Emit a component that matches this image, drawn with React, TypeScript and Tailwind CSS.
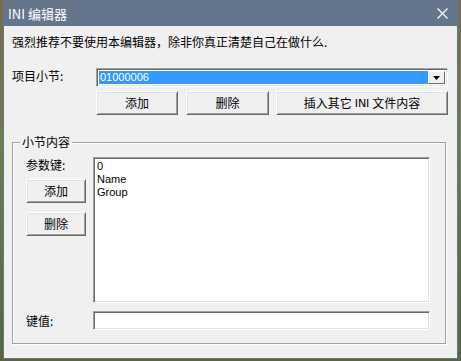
import type { ReactNode } from "react";

const cjk = "font-['Noto_Sans_CJK_SC',sans-serif]";

function RaisedButton({ children, className = "" }: { children: ReactNode; className?: string }) {
  return (
    <button
      type="button"
      className={`flex items-center justify-center border border-t-white border-l-white border-b-[#696969] border-r-[#696969] bg-[#f0f0f0] text-[12px] leading-none text-black shadow-[inset_1px_1px_0_#e3e3e3,inset_-1px_-1px_0_#a0a0a0] ${className}`}
    >
      {children}
    </button>
  );
}

function SunkenBox({ children, className = "" }: { children?: ReactNode; className?: string }) {
  return (
    <div
      className={`border border-t-[#a0a0a0] border-l-[#a0a0a0] border-b-white border-r-white bg-white shadow-[inset_1px_1px_0_#696969,inset_-1px_-1px_0_#e3e3e3] ${className}`}
    >
      {children}
    </div>
  );
}

export default function App() {
  const keys = ["0", "Name", "Group"];

  return (
    <div className={`h-[361px] w-[461px] overflow-hidden bg-[linear-gradient(180deg,#7a6a4a_0%,#6d7d4c_40%,#55683c_100%)] pl-[3px] ${cjk}`}>
      <div className="flex h-[359px] w-[455px] flex-col border-x border-b border-[#65758b] bg-[#f0f0f0]">
        {/* title bar */}
        <div className="flex h-[26px] shrink-0 items-center justify-between bg-[#65758b] pl-[4px] pr-[9px]">
          <span className="text-[13px] leading-none text-white">INI 编辑器</span>
          <svg width="11" height="11" viewBox="0 0 11 11" className="mt-[1px]">
            <path d="M0.5 0.5 L10.5 10.5 M10.5 0.5 L0.5 10.5" stroke="#ffffff" strokeWidth="1.2" />
          </svg>
        </div>

        <div className="flex flex-col pl-[8px]">
          <p className="mt-[9px] h-[14px] text-[12px] leading-[14px] text-black">
            强烈推荐不要使用本编辑器，除非你真正清楚自己在做什么.
          </p>

          {/* section row */}
          <div className="mt-[19px] flex">
            <div className="w-[84px] pt-[1px] text-[12px] leading-[14px] text-black">项目小节:</div>
            <div className="flex w-[352px] flex-col">
              <SunkenBox className="flex h-[19px] items-stretch p-[2px]">
                <div className="flex flex-1 items-center bg-[#3399ff] pl-[1px] font-['Liberation_Sans',sans-serif] text-[11px] text-white">
                  01000006
                </div>
                <div className="flex w-[17px] items-center justify-center border border-t-white border-l-white border-b-[#696969] border-r-[#696969] bg-[#f0f0f0]">
                  <svg width="7" height="4" viewBox="0 0 7 4">
                    <path d="M0 0 H7 L3.5 4 Z" fill="#000000" />
                  </svg>
                </div>
              </SunkenBox>
              <div className="mt-[4px] flex">
                <RaisedButton className="h-[24px] w-[82px]">添加</RaisedButton>
                <RaisedButton className="ml-[8px] h-[24px] w-[83px]">删除</RaisedButton>
                <RaisedButton className="ml-[7px] h-[24px] w-[172px]">
                  插入其它 <span className="mx-[3px] font-['DejaVu_Sans',sans-serif] text-[11px]">INI</span> 文件内容
                </RaisedButton>
              </div>
            </div>
          </div>

          {/* group box */}
          <div className="relative mt-[27px] h-[202px] w-[434px] border border-[#a0a0a0] shadow-[inset_1px_1px_0_#fff,1px_1px_0_#fff]">
            <span className="absolute -top-[8px] left-[7px] bg-[#f0f0f0] px-[2px] text-[12px] leading-[14px] text-black">
              小节内容
            </span>
            <div className="flex pl-[13px] pt-[14px]">
              <div className="flex w-[67px] flex-col">
                <div className="pt-[1px] text-[12px] leading-[14px] text-black">参数键:</div>
                <RaisedButton className="mt-[7px] h-[24px] w-[60px]">添加</RaisedButton>
                <RaisedButton className="mt-[9px] h-[24px] w-[60px]">删除</RaisedButton>
              </div>
              <SunkenBox className="h-[146px] w-[337px] pl-[3px] pt-[2px]">
                {keys.map((k) => (
                  <div key={k} className="h-[13px] font-['Liberation_Sans',sans-serif] text-[11px] leading-[13px] text-black">
                    {k}
                  </div>
                ))}
              </SunkenBox>
            </div>
            <div className="mt-[8px] flex items-center pl-[13px]">
              <div className="w-[67px] text-[12px] leading-[14px] text-black">键值:</div>
              <SunkenBox className="h-[19px] w-[337px]" />
            </div>
          </div>
        </div>
      </div>
    </div>
  );
}
